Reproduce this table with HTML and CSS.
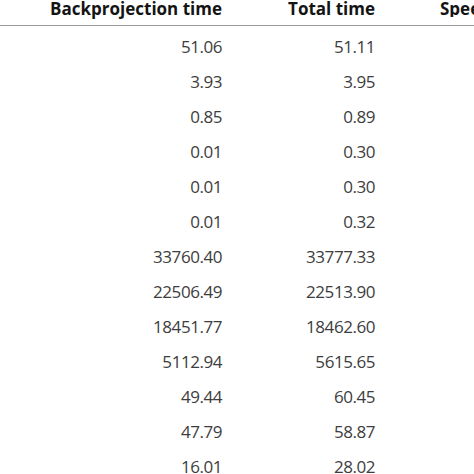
FILE: index.html
```html
<!DOCTYPE html>
<html>
<head>
<meta charset="utf-8">
<link rel="stylesheet" href="styles.css">
</head>
<body>
<div class="table">
  <div class="row head">
    <div class="c1">Backprojection time</div>
    <div class="c2">Total time</div>
    <div class="c3">Speedup</div>
  </div>
  <div class="row"><div class="c1">51.06</div><div class="c2">51.11</div><div class="c3"></div></div>
  <div class="row"><div class="c1">3.93</div><div class="c2">3.95</div><div class="c3"></div></div>
  <div class="row"><div class="c1">0.85</div><div class="c2">0.89</div><div class="c3"></div></div>
  <div class="row"><div class="c1">0.01</div><div class="c2">0.30</div><div class="c3"></div></div>
  <div class="row"><div class="c1">0.01</div><div class="c2">0.30</div><div class="c3"></div></div>
  <div class="row"><div class="c1">0.01</div><div class="c2">0.32</div><div class="c3"></div></div>
  <div class="row"><div class="c1">33760.40</div><div class="c2">33777.33</div><div class="c3"></div></div>
  <div class="row"><div class="c1">22506.49</div><div class="c2">22513.90</div><div class="c3"></div></div>
  <div class="row"><div class="c1">18451.77</div><div class="c2">18462.60</div><div class="c3"></div></div>
  <div class="row"><div class="c1">5112.94</div><div class="c2">5615.65</div><div class="c3"></div></div>
  <div class="row"><div class="c1">49.44</div><div class="c2">60.45</div><div class="c3"></div></div>
  <div class="row"><div class="c1">47.79</div><div class="c2">58.87</div><div class="c3"></div></div>
  <div class="row"><div class="c1">16.01</div><div class="c2">28.02</div><div class="c3"></div></div>
</div>
</body>
</html>
```
FILE: styles.css
```css
html, body {
  margin: 0;
  padding: 0;
  background: #ffffff;
  overflow: hidden;
  width: 474px;
  height: 474px;
}
.table {
  font-family: "Open Sans", "Noto Sans", sans-serif;
  color: #3d3d3d;
  width: 474px;
}
.row {
  display: grid;
  grid-template-columns: 222px 153px 99px;
  height: 35px;
  align-items: center;
  font-size: 17px;
  letter-spacing: -0.45px;
  white-space: nowrap;
}
.row.head {
  height: 25px;
  border-bottom: 1px solid #9a9a9a;
  align-items: start;
  font-weight: 700;
  letter-spacing: 0;
  color: #141414;
  margin-bottom: 3px;
}
.head > div {
  line-height: 16px;
  padding-top: 1px;
}
.c1, .c2 {
  text-align: right;
}
.c3 {
  padding-left: 65px;
  overflow: hidden;
}
```
